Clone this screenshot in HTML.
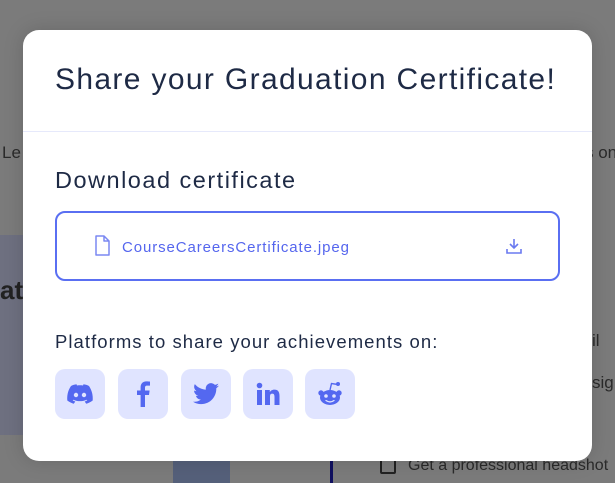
<!DOCTYPE html>
<html style="background:#7b7b7b"><head><meta charset="utf-8"><style>
*{margin:0;padding:0;box-sizing:border-box}
body{width:615px;height:483px;overflow:hidden;background:#7b7b7b;font-family:"Liberation Sans",sans-serif;position:relative}
.bg{position:absolute;color:#2a2a2a;font-size:17px;white-space:nowrap}
.modal{position:absolute;left:23px;top:30px;width:569px;height:431px;background:#fff;border-radius:16px;box-shadow:0 0 20px rgba(0,0,0,.15)}
h1{position:absolute;left:32px;top:33px;font-size:30px;font-weight:normal;color:#1e2a45;white-space:nowrap;letter-spacing:1.35px}
.hr{position:absolute;left:0;right:0;top:101px;height:1px;background:#e6e9fb}
h2{position:absolute;left:32px;top:137px;font-size:23.5px;font-weight:normal;color:#1e2a45;letter-spacing:1.5px;white-space:nowrap}
.box{position:absolute;left:32px;top:181px;width:505px;height:70px;border:2px solid #5a6ff2;border-radius:10px}
.fn{position:absolute;left:65px;top:26px;font-size:15px;color:#5566ee;letter-spacing:.9px;white-space:nowrap}
.p{position:absolute;left:32px;top:301px;font-size:18.5px;color:#1e2a45;white-space:nowrap;letter-spacing:1.05px}
.b{position:absolute;top:339px;width:50px;height:50px;background:#e0e4ff;border-radius:10px;display:flex;align-items:center;justify-content:center}
</style></head><body>
<div class="bg" style="left:2px;top:143px">Le</div>
<div class="bg" style="left:585px;top:143px">s on</div>
<div style="position:absolute;left:0;top:235px;width:23px;height:200px;background:#6e7080"></div>
<div style="position:absolute;left:0;top:275px;font-size:26px;font-weight:bold;color:#222">at</div>
<div class="bg" style="left:592px;top:331px">il</div>
<div class="bg" style="left:592px;top:373px">sig</div>
<div style="position:absolute;left:173px;top:461px;width:57px;height:22px;background:#55607a"></div>
<div style="position:absolute;left:330px;top:461px;width:3px;height:22px;background:#101060"></div>
<div style="position:absolute;left:380px;top:458px;width:16px;height:16px;border:2px solid #222;border-radius:2px"></div>
<div class="bg" style="left:408px;top:457px;font-size:16px">Get a professional headshot</div>
<div class="modal">
<h1>Share your Graduation Certificate!</h1>
<div class="hr"></div>
<h2>Download certificate</h2>
<div class="box">
<svg style="position:absolute;left:37px;top:22px" width="16" height="22" viewBox="0 0 16 22"><path d="M2 1h8l5 5v14H2z M10 1v5h5" fill="none" stroke="#7b88f2" stroke-width="1.5" stroke-linejoin="round"/></svg>
<div class="fn">CourseCareersCertificate.jpeg</div>
<svg style="position:absolute;left:448px;top:24px" width="18" height="18" viewBox="0 0 18 18"><path d="M9 2v9M5 7l4 4 4-4M2 12v4h14v-4" fill="none" stroke="#6a7af0" stroke-width="1.6"/></svg>
</div>
<div class="p">Platforms to share your achievements on:</div>
<div class="b" style="left:32px"><svg width="28" height="22" viewBox="0 0 28 22"><path d="M23 3C21 2 19 1.5 17.5 1.3L17 2.5C15 2.2 13 2.2 11 2.5L10.5 1.3C9 1.5 7 2 5 3 1.5 8 1 13 1.3 17.5 3.5 19.2 5.7 20.2 7.8 20.8L9.3 18.5C8.3 18.2 7.5 17.7 6.7 17.2L7.3 16.7C11.5 18.6 16.5 18.6 20.7 16.7L21.3 17.2C20.5 17.7 19.7 18.2 18.7 18.5L20.2 20.8C22.3 20.2 24.5 19.2 26.7 17.5 27.1 12.3 26 7.6 23 3Z" fill="#5468f0"/><circle cx="10" cy="12" r="2.2" fill="#e0e4ff"/><circle cx="18" cy="12" r="2.2" fill="#e0e4ff"/></svg></div>
<div class="b" style="left:95px"><svg width="14" height="26" viewBox="0 0 14 26"><path d="M9 26V14h4l.6-4.5H9V6.8c0-1.3.4-2.2 2.2-2.2H14V.6C13.5.5 12 .4 10.4.4 7 .4 4.6 2.5 4.6 6.3v3.2H1V14h3.6v12z" fill="#5468f0"/></svg></div>
<div class="b" style="left:158px"><svg width="26" height="22" viewBox="0 0 24 20"><path d="M24 2.3c-.9.4-1.8.7-2.8.8 1-.6 1.8-1.6 2.2-2.7-1 .6-2 1-3.1 1.2A4.9 4.9 0 0 0 11.9 6C7.8 5.8 4.200 3.9 1.7.9c-1.3 2.3-.6 5 1.5 6.5-.8 0-1.6-.2-2.2-.6 0 2.4 1.7 4.4 3.9 4.8-.7.2-1.5.2-2.2.1.6 2 2.4 3.4 4.6 3.4A9.9 9.9 0 0 1 0 17.1 14 14 0 0 0 7.5 19.300c9.1 0 14.3-7.7 14-14.6 1-.7 1.8-1.5 2.5-2.4z" fill="#5468f0"/></svg></div>
<div class="b" style="left:220px"><svg width="24" height="24" viewBox="0 0 24 24"><rect x="1" y="8" width="5" height="15" fill="#5468f0"/><circle cx="3.5" cy="3.5" r="2.8" fill="#5468f0"/><path d="M9 8h4.8v2.1C14.5 8.9 16 7.6 18.5 7.6 22 7.6 23.5 9.8 23.5 14V23h-5v-8c0-2-.4-3.4-2.3-3.4S14 13 14 15v8H9z" fill="#5468f0"/></svg></div>
<div class="b" style="left:282px"><svg width="26" height="26" viewBox="0 0 26 26"><circle cx="21" cy="3" r="2" fill="#5468f0"/><path d="M13 9l1.5-6.5L21 3.5" fill="none" stroke="#5468f0" stroke-width="1.4"/><circle cx="4" cy="12" r="2.7" fill="#5468f0"/><circle cx="22" cy="12" r="2.7" fill="#5468f0"/><ellipse cx="13" cy="16.5" rx="10" ry="7.5" fill="#5468f0"/><circle cx="9" cy="15" r="1.8" fill="#e0e4ff"/><circle cx="17" cy="15" r="1.8" fill="#e0e4ff"/><path d="M9 19.5c2.5 1.8 5.5 1.8 8 0" fill="none" stroke="#e0e4ff" stroke-width="1.3" stroke-linecap="round"/></svg></div>
</div>
</body></html>
